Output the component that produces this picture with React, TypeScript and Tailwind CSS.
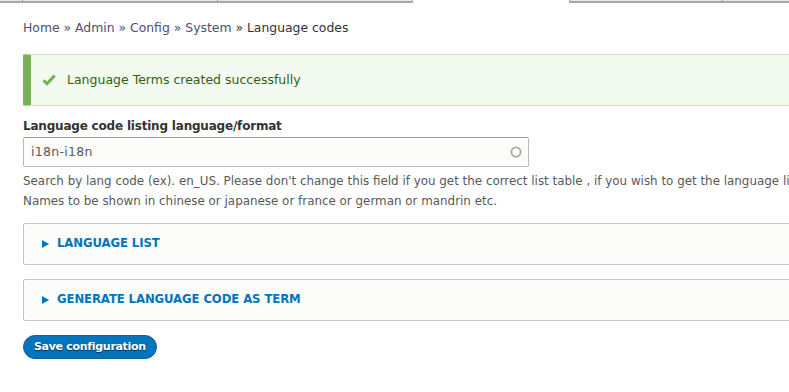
import React from 'react';

const font = "font-['DejaVu_Sans','Liberation_Sans',sans-serif]";

const Tabs: React.FC = () => (
  <div className="flex h-[3px] w-[789px]">
    <div className="w-[23px] shrink-0 bg-[#e6e6e2] border-b-2 border-r border-[#a6a6a6]" />
    <div className="w-[195px] shrink-0 bg-[#e6e6e2] border-b-2 border-r border-[#a6a6a6]" />
    <div className="w-[195px] shrink-0 bg-[#e6e6e2] border-b-2 border-r border-[#a6a6a6]" />
    <div className="w-[156px] shrink-0" />
    <div className="w-[154px] shrink-0 bg-[#e6e6e2] border-b-2 border-l border-r border-[#a6a6a6]" />
    <div className="w-[120px] shrink-0 bg-[#e6e6e2] border-b-2 border-[#a6a6a6]" />
  </div>
);

const Details: React.FC<{ title: string }> = ({ title }) => (
  <div className="h-[42px] flex items-center rounded-l-[2px] border border-[#c5c5c5] bg-[#fcfcfa] pl-[18px]">
    <svg width="7" height="8" viewBox="0 0 7 8" className="mr-[8px]">
      <path d="M0 0 L7 4 L0 8 Z" fill="#0074bd" />
    </svg>
    <span className="text-[#0074bd] font-bold uppercase text-[11.7px] tracking-[-0.1px]">{title}</span>
  </div>
);

export default function App() {
  return (
    <div className={`w-[789px] h-[392px] overflow-hidden bg-white text-[#333] ${font}`}>
      <Tabs />
      <div className="w-[860px] pl-[23px]">
        <nav className="pt-[16px] text-[12.4px] leading-[18px] tracking-[0px]">
          <a className="text-[#4e5072]">Home</a>
          <span className="text-[#4e5072]"> » </span>
          <a className="text-[#4e5072]">Admin</a>
          <span className="text-[#4e5072]"> » </span>
          <a className="text-[#4e5072]">Config</a>
          <span className="text-[#4e5072]"> » </span>
          <a className="text-[#4e5072]">System</a>
          <span className="text-[#333]"> » Language codes</span>
        </nav>

        <div className="mt-[17px] h-[52px] flex items-center border border-[#c9e1bd] border-l-[8px] border-l-[#77b259] bg-[#f3faef] rounded-l-[2px] pl-[11px]">
          <svg width="14" height="12" viewBox="0 0 14 12" className="mr-[11px]">
            <path d="M1.5 6.3 L5 9.6 L12.7 1.6" fill="none" stroke="#73b355" strokeWidth="3" />
          </svg>
          <span className="text-[12.5px] text-[#325e1c] tracking-[0px]">Language Terms created successfully</span>
        </div>

        <div className="mt-[12px]">
          <label className="block font-bold text-[12px] leading-[16px] text-[#333] tracking-[-0.2px]">
            Language code listing language/format
          </label>
          <div className="mt-[3px] w-[506px] h-[30px] flex items-center justify-between border border-[#b8b8b8] border-t-[#999] rounded-[2px] bg-[#fcfcfa] pl-[7px] pr-[6px]">
            <span className="text-[12.5px] text-[#595959] tracking-[0.3px]">i18n-i18n</span>
            <svg width="12" height="12" viewBox="0 0 12 12">
              <circle cx="6" cy="6" r="4.6" fill="none" stroke="#aaa" strokeWidth="1.8" />
            </svg>
          </div>
          <div className="mt-[4px] text-[11.9px] leading-[20px] text-[#595959] tracking-[0px] whitespace-nowrap">
            <div>Search by lang code (ex). en_US. Please don't change this field if you get the correct list table , if you wish to get the language list</div>
            <div>Names to be shown in chinese or japanese or france or german or mandrin etc.</div>
          </div>
        </div>

        <div className="mt-[12px] flex flex-col gap-[14px]">
          <Details title="Language list" />
          <Details title="Generate language code as term" />
        </div>

        <button className="mt-[14px] h-[24px] px-[10px] rounded-full bg-[#0074bd] border border-[#1e5c90] text-white font-bold text-[11px] tracking-[-0.3px] [text-shadow:0_1px_1px_rgba(0,0,0,0.6)]">
          Save configuration
        </button>
      </div>
    </div>
  );
}
